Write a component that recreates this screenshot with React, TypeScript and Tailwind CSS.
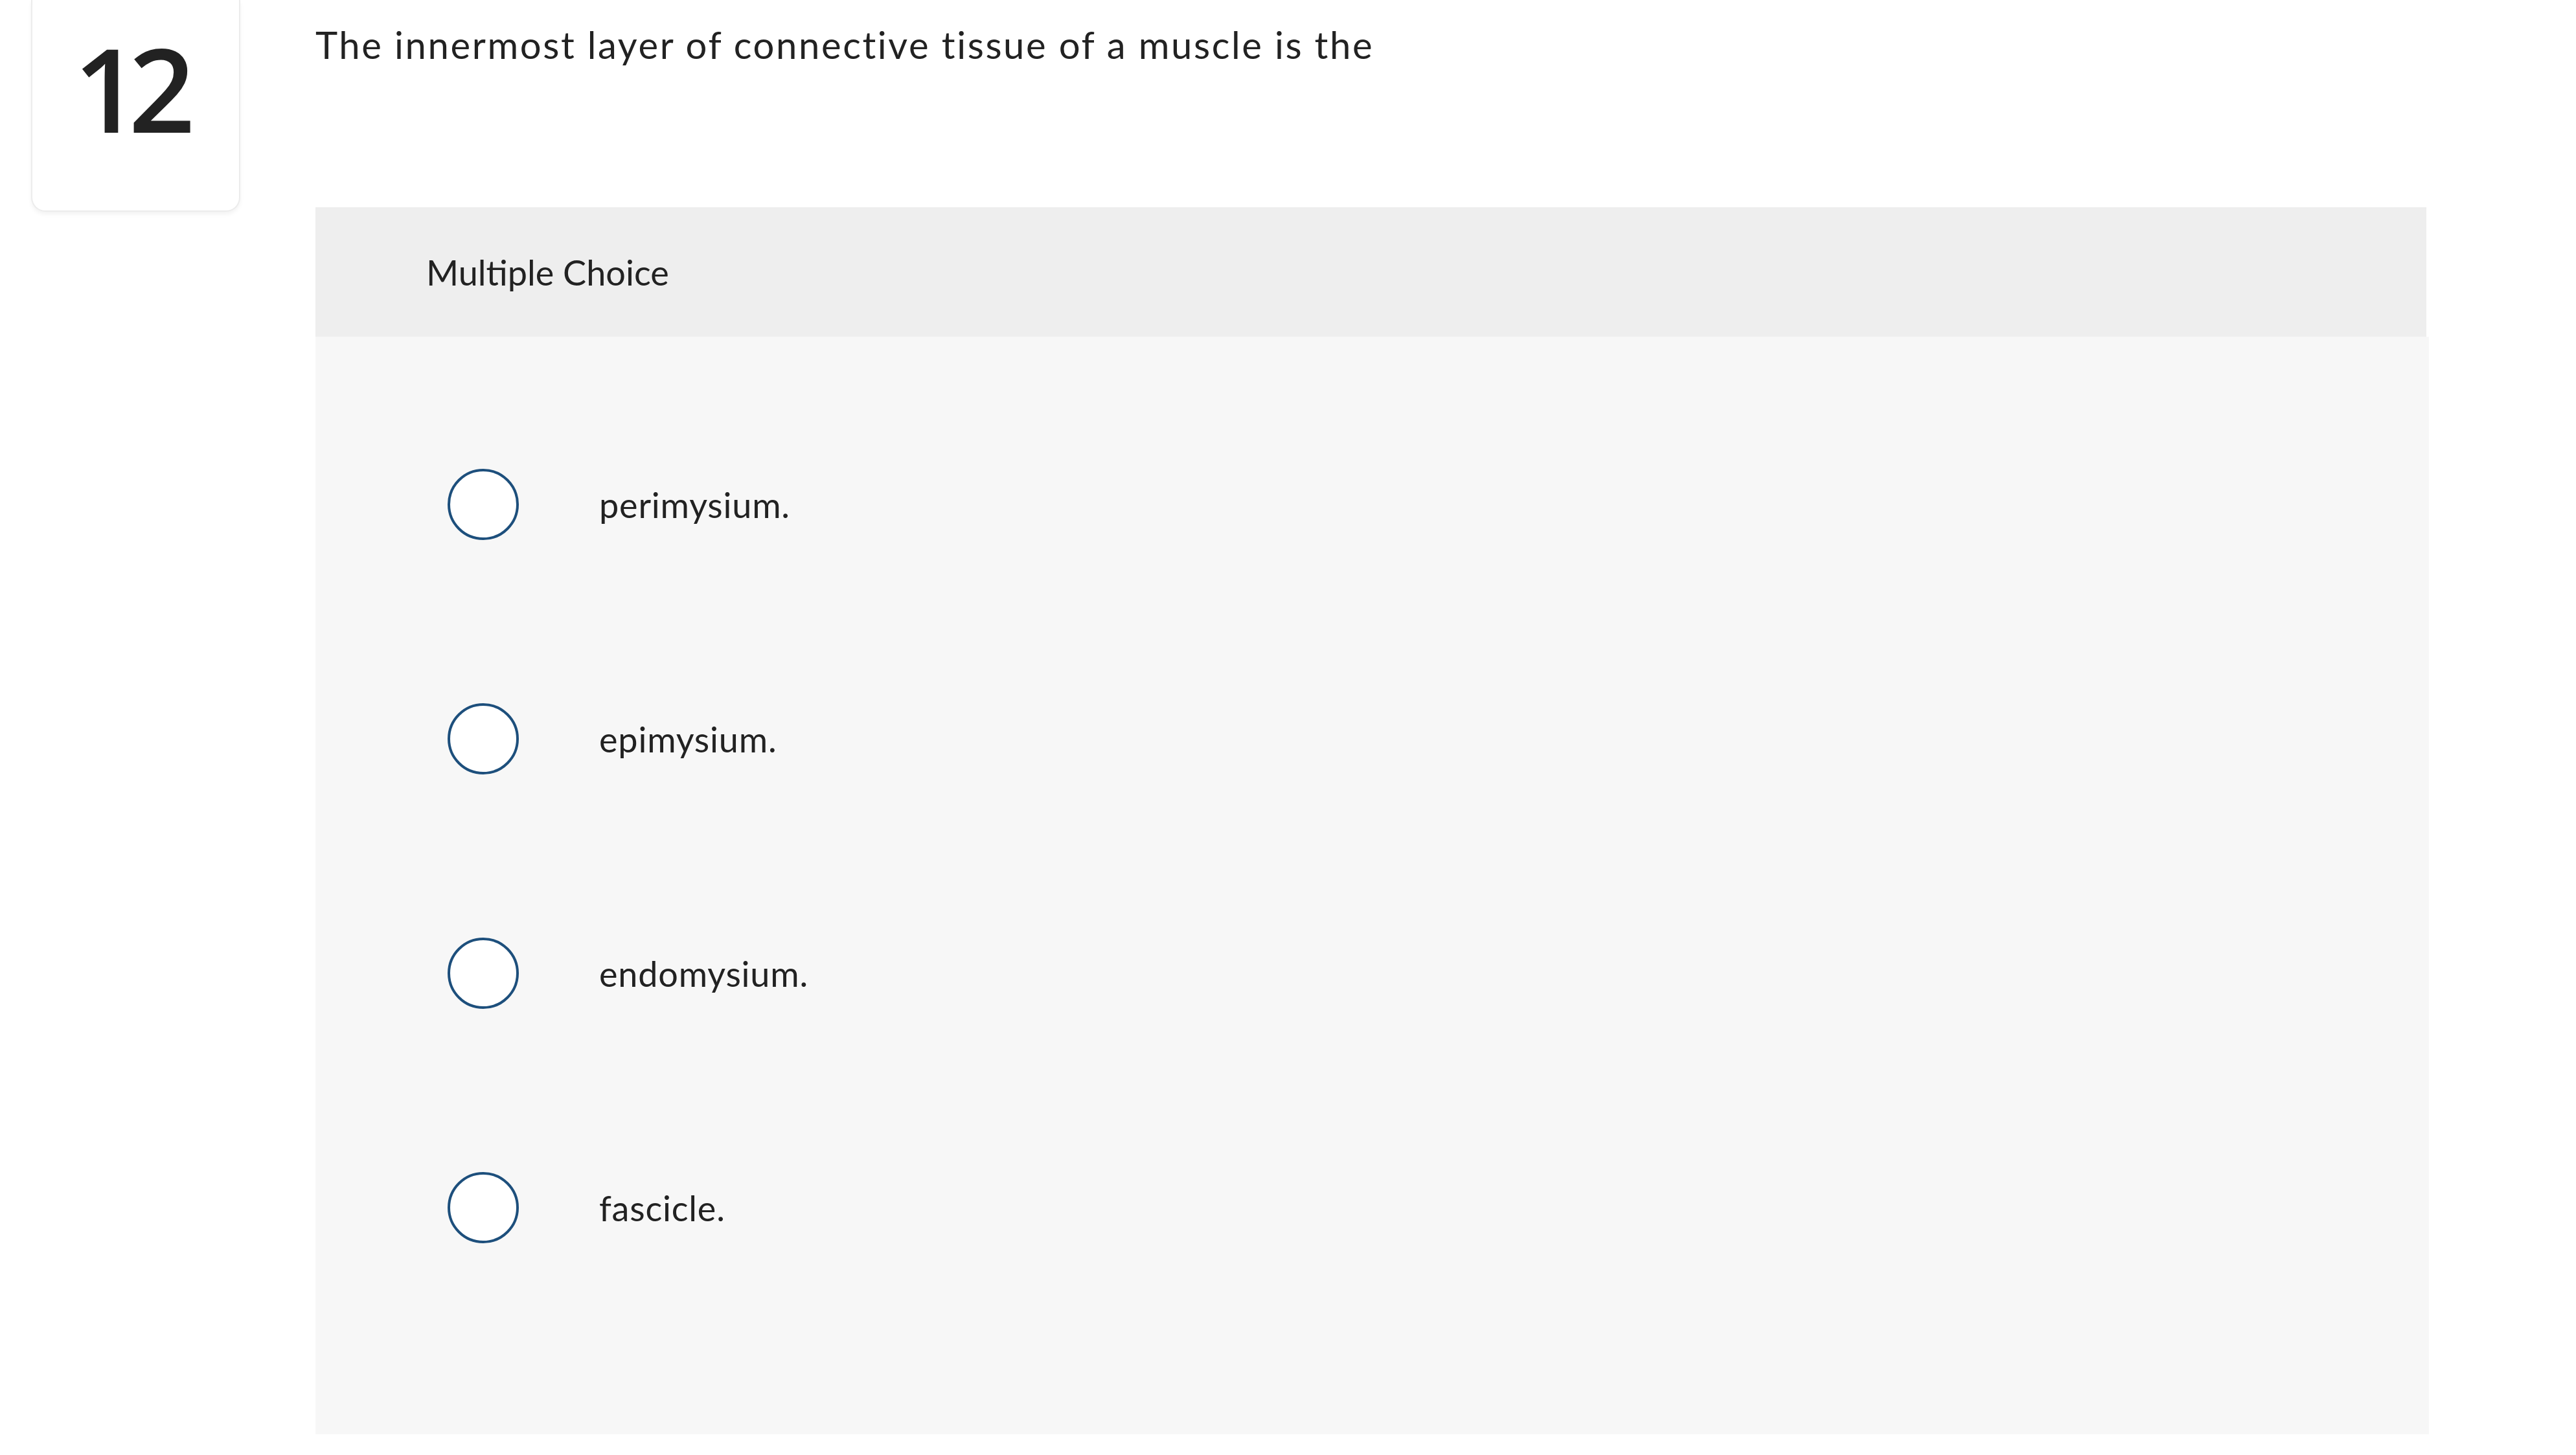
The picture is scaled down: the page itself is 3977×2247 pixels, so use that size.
import React from "react";

const options = ["perimysium.", "epimysium.", "endomysium.", "fascicle."];

function Radio() {
  return (
    <span className="block w-[110px] h-[110px] rounded-full border-[4px] border-[#1d4f7c] bg-white shrink-0" />
  );
}

export default function App() {
  return (
    <div
      className="w-[3977px] h-[2247px] bg-white overflow-hidden flex text-[#1f1f1f]"
      style={{ fontFamily: "Lato, 'Open Sans', sans-serif" }}
    >
      {/* question number */}
      <div className="w-[487px] shrink-0 pl-[48px]">
        <div className="w-[323px] h-[327px] bg-white border-x-2 border-b-2 border-[#ececec] rounded-b-[22px] shadow-[0_4px_6px_rgba(0,0,0,0.05)] flex justify-center pt-[46px]">
          <span
            className="text-[180px] leading-none font-semibold text-[#222] tracking-[-18px] pr-[22px]"
            style={{ fontFamily: "'Open Sans', sans-serif" }}
          >
            12
          </span>
        </div>
      </div>

      {/* question body */}
      <div className="flex flex-col">
        <div className="h-[320px] pt-[40px]">
          <p className="text-[58px] leading-none text-[#222] tracking-[2.6px]">
            The innermost layer of connective tissue of a muscle is the
          </p>
        </div>
        <div className="w-[3263px]">
          <div className="h-[200px] bg-[#eeeeee] flex items-center pl-[171px] mr-[4px]">
            <span className="text-[54px] text-[#222]">Multiple Choice</span>
          </div>
          <div className="h-[1695px] bg-[#f7f7f7] pt-[78px]">
            {options.map((o) => (
              <div key={o} className="h-[362px] flex items-center pl-[204px]">
                <Radio />
                <span className="ml-[124px] text-[54px] text-[#222] tracking-[0.8px]">{o}</span>
              </div>
            ))}
          </div>
        </div>
      </div>
    </div>
  );
}
